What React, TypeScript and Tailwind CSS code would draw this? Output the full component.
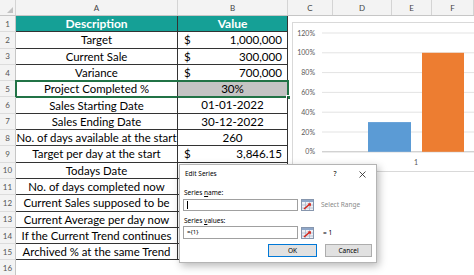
import React from 'react';

type Row = {
  a: string;
  b?: string;
  dollar?: boolean;
  head?: boolean;
  gray?: boolean;
  empty?: boolean;
};

const rows: Row[] = [
  { a: 'Description', b: 'Value', head: true },
  { a: 'Target', b: '1,000,000', dollar: true },
  { a: 'Current Sale', b: '300,000', dollar: true },
  { a: 'Variance', b: '700,000', dollar: true },
  { a: 'Project Completed %', b: '30%', gray: true },
  { a: 'Sales Starting Date', b: '01-01-2022' },
  { a: 'Sales Ending Date', b: '30-12-2022' },
  { a: 'No. of days available at the start', b: '260' },
  { a: 'Target per day at the start', b: '3,846.15', dollar: true },
  { a: 'Todays Date' },
  { a: 'No. of days completed now' },
  { a: 'Current Sales supposed to be' },
  { a: 'Current Average per day now' },
  { a: 'If the Current Trend continues' },
  { a: 'Archived % at the same Trend' },
  { a: '', empty: true },
];

const columns = [
  { name: 'A', w: 'w-[162px]' },
  { name: 'B', w: 'w-[110px]' },
  { name: 'C', w: 'w-[45px]' },
  { name: 'D', w: 'w-[59px]' },
  { name: 'E', w: 'w-[40px]' },
  { name: 'F', w: 'flex-1' },
];

function RangeIcon() {
  return (
    <svg width="13" height="12" viewBox="0 0 13 12">
      <rect x="0.5" y="0.5" width="12" height="11" fill="#eef1f6" stroke="#8796ad" />
      <rect x="1" y="1" width="11" height="2" fill="#8fa7c9" />
      <path d="M1 6h11M1 9h11M4.5 3v8M8.5 3v8" stroke="#aab7cb" strokeWidth="0.8" />
      <path d="M3 10L9 5" stroke="#d3261b" strokeWidth="1.6" />
      <path d="M6.5 4.5L10 4.2L9.6 7.6Z" fill="#d3261b" />
    </svg>
  );
}

function Chart() {
  const grid = [
    { label: '120%', y: 10 },
    { label: '100%', y: 29.8 },
    { label: '80%', y: 49.6 },
    { label: '60%', y: 69.4 },
    { label: '40%', y: 89.2 },
    { label: '20%', y: 109 },
    { label: '0%', y: 128.8 },
  ];
  return (
    <div className="absolute left-[292px] top-[22px] w-[190px] h-[150px] bg-white border border-[#d9d9d9]">
      <svg width="190" height="148" className="block">
        {grid.map((g, i) => (
          <g key={g.label}>
            <line
              x1="29"
              x2="200"
              y1={g.y}
              y2={g.y}
              stroke={i === grid.length - 1 ? '#bfbfbf' : '#e3e3e3'}
              strokeWidth="1"
            />
            <text
              x="22"
              y={g.y + 2.5}
              textAnchor="end"
              fontSize="7"
              fill="#595959"
              fontFamily="Lato, sans-serif"
            >
              {g.label}
            </text>
          </g>
        ))}
        <rect x="75" y="99.1" width="43" height="29.7" fill="#5b9bd5" />
        <rect x="129" y="29.8" width="42" height="99" fill="#ed7d31" />
        <text x="123" y="141.5" textAnchor="middle" fontSize="7" fill="#595959" fontFamily="Lato, sans-serif">
          1
        </text>
      </svg>
    </div>
  );
}

function Dialog() {
  return (
    <div className="absolute left-[179px] top-[164px] w-[198px] h-[99px] bg-white border border-[#b4b4b4] shadow-[2px_3px_8px_rgba(0,0,0,0.28)] font-['Noto_Sans',sans-serif] text-black">
      <div className="flex items-center h-[18px] pl-[5px]">
        <span className="text-[6.5px]">Edit Series</span>
        <span className="ml-auto text-[7px] w-[10px] text-center">?</span>
        <span className="ml-[18px] mr-[10px] w-[8px] flex items-center justify-center">
          <svg width="7" height="7" viewBox="0 0 7 7">
            <path d="M0.5 0.5L6.5 6.5M6.5 0.5L0.5 6.5" stroke="#222" strokeWidth="0.8" />
          </svg>
        </span>
      </div>
      <div className="px-[3px] pt-[4px]">
        <div className="h-[12px] flex items-center pl-[1px] text-[6.5px]">
          Series&nbsp;<span className="underline">n</span>ame:
        </div>
        <div className="flex items-center h-[12px]">
          <div className="w-[115px] h-[12px] bg-white border border-[#a0a0a0] flex items-center pl-[3px]">
            <span className="w-px h-[8px] bg-black" />
          </div>
          <div className="ml-[3px]">
            <RangeIcon />
          </div>
          <span className="ml-[7px] text-[6.5px] text-[#8a8a8a]">Select Range</span>
        </div>
        <div className="h-[11px] mt-[4px] flex items-center pl-[1px] text-[6.5px]">
          Series&nbsp;<span className="underline">v</span>alues:
        </div>
        <div className="flex items-center h-[13px]">
          <div className="w-[115px] h-[13px] bg-white border border-[#a0a0a0] flex items-center pl-[3px] text-[6px]">
            ={'{'}1{'}'}
          </div>
          <div className="ml-[3px]">
            <RangeIcon />
          </div>
          <span className="ml-[9px] text-[6.5px]">= 1</span>
        </div>
        <div className="flex justify-end gap-[8px] mt-[5px] pr-[1px]">
          <div className="w-[49px] h-[13px] bg-[#e1e1e1] border border-[#0078d7] flex items-center justify-center text-[6.5px]">
            OK
          </div>
          <div className="w-[47px] h-[13px] bg-[#e1e1e1] border border-[#adadad] flex items-center justify-center text-[6.5px]">
            Cancel
          </div>
        </div>
      </div>
    </div>
  );
}

export default function App() {
  return (
    <div className="relative w-[474px] h-[275px] overflow-hidden bg-white font-['Lato',sans-serif]">
      {/* column headers */}
      <div className="flex h-[16px] bg-[#f3f3f3] border-b border-[#c6c6c6]">
        <div className="w-[16px] relative border-r border-[#d4d4d4]">
          <div className="absolute right-[2px] bottom-[2px] w-0 h-0 border-l-[6px] border-l-transparent border-b-[6px] border-b-[#c2c2c2]" />
        </div>
        {columns.map((c) => (
          <div
            key={c.name}
            className={`${c.w} flex items-center justify-center border-r border-[#d4d4d4] text-[8px] text-[#444]`}
          >
            {c.name}
          </div>
        ))}
      </div>

      {rows.map((r, i) => (
        <div key={i} className="relative flex h-[16.3px]">
          <div className="w-[16px] shrink-0 bg-[#f3f3f3] border-b border-[#dcdcdc] border-r border-r-[#c6c6c6] flex items-center justify-center text-[8px] text-[#555]">
            {i + 1}
          </div>
          {r.empty ? (
            <div className="flex-1" />
          ) : (
            <>
              <div
                className={`w-[162px] shrink-0 border-b border-r border-[#333] flex items-center justify-center overflow-hidden whitespace-nowrap text-[11.4px] ${
                  r.head ? 'bg-[#15a096] text-white font-bold text-[12px]' : 'text-black'
                }`}
              >
                {r.a}
              </div>
              <div
                className={`w-[110px] shrink-0 border-b border-r border-[#333] flex items-center overflow-hidden whitespace-nowrap text-[11.6px] ${
                  r.head ? 'bg-[#15a096] text-white font-bold text-[12px]' : r.gray ? 'bg-[#c4c4c4] text-black' : 'text-black'
                } ${r.dollar ? 'justify-between pl-[6px] pr-[5px]' : 'justify-center'}`}
              >
                {r.dollar && <span>$</span>}
                {r.b && <span>{r.b}</span>}
              </div>
              <div className="flex-1" />
            </>
          )}
          {i === 4 && (
            <div className="absolute left-[15px] top-[-1px] w-[274px] h-[18px] border-2 border-[#217346]">
              <div className="absolute right-[-4px] bottom-[-4px] w-[5px] h-[5px] bg-[#217346] border border-white" />
            </div>
          )}
        </div>
      ))}

      <Chart />
      <Dialog />
    </div>
  );
}
